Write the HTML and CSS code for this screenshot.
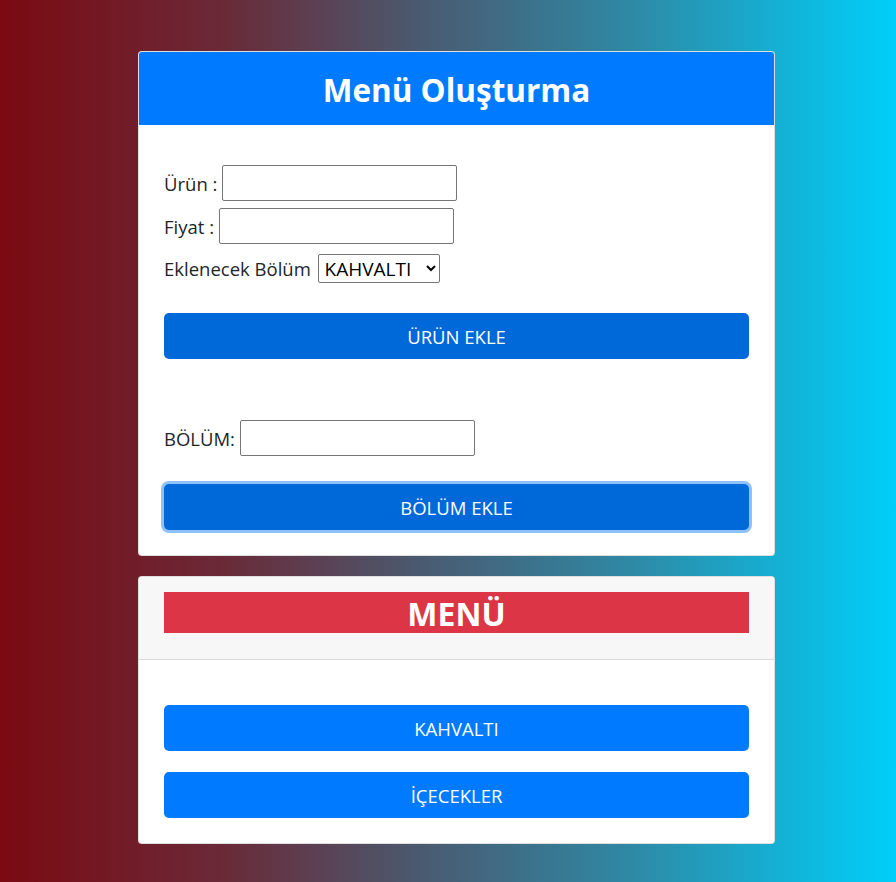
FILE: index.html
```html
<!DOCTYPE html>
<html lang="tr">
<head>
<meta charset="utf-8">
<title>Menü Oluşturma</title>
<link rel="stylesheet" href="styles.css">
</head>
<body>
<div class="wrap">
  <div class="card">
    <div class="card-head blue">
      <h1 class="title">Menü Oluşturma</h1>
    </div>
    <div class="card-body form-body">
      <div class="row">Ürün : <input class="field" type="text"></div>
      <div class="row">Fiyat : <input class="field" type="text"></div>
      <div class="row sel-row">Eklenecek Bölüm <select class="sel"><option>KAHVALTI</option></select></div>
      <button class="btn dark first-btn">ÜRÜN EKLE</button>
      <div class="row section-row">BÖLÜM: <input class="field" type="text"></div>
      <button class="btn dark focus">BÖLÜM EKLE</button>
    </div>
  </div>
  <div class="card">
    <div class="card-head light">
      <h1 class="menu-title">MENÜ</h1>
    </div>
    <div class="card-body list-body">
      <button class="btn primary">KAHVALTI</button>
      <button class="btn primary">İÇECEKLER</button>
    </div>
  </div>
</div>
</body>
</html>
```
FILE: styles.css
```css
html, body {
  margin: 0;
  padding: 0;
}
body {
  width: 896px;
  height: 882px;
  background: linear-gradient(to right, #7b0a12 0%, #6a2a38 25%, #4a5a70 47%, #2f88a4 70%, #00cff9 100%);
  font-family: "Open Sans", "Noto Sans", sans-serif;
  color: #212529;
  overflow: hidden;
}
.wrap {
  width: 637px;
  margin: 51px 0 0 138px;
  display: flex;
  flex-direction: column;
  gap: 20px;
}
.card {
  background: #fff;
  border: 1px solid rgba(0,0,0,0.125);
  border-radius: 4px;
  overflow: hidden;
}
.card-head.blue {
  background: #007bff;
  height: 73px;
  display: flex;
  align-items: center;
  justify-content: center;
}
.title {
  margin: 0;
  color: #fff;
  font-size: 31.5px;
  font-weight: 700;
  line-height: 1;
  padding-top: 2px;
}
.card-head.light {
  background: #f7f7f7;
  border-bottom: 1px solid rgba(0,0,0,0.125);
  padding: 15px 25px 26px;
}
.menu-title {
  margin: 0;
  background: #dc3545;
  color: #fff;
  height: 41px;
  font-size: 32px;
  font-weight: 700;
  line-height: 44px;
  text-align: center;
}
.card-body {
  padding: 25px;
  display: flex;
  flex-direction: column;
}
.form-body {
  padding-top: 40px;
}
.row {
  font-size: 18.5px;
  display: flex;
  align-items: center;
  white-space: pre;
  height: 36px;
}
.row + .row {
  margin-top: 7px;
}
.sel-row {
  margin-top: 9px !important;
  height: 31px;
}
.field {
  width: 235px;
  height: 36px;
  box-sizing: border-box;
  border: 1px solid #767676;
  border-radius: 2px;
  margin: 0;
  font-size: 17px;
  font-family: inherit;
}
.sel {
  height: 29px;
  width: 122px;
  margin-left: 2px;
  font-size: 19px;
  font-family: "Open Sans", sans-serif;
  border: 1px solid #767676;
  border-radius: 2px;
  background: #fff;
  color: #000;
  padding: 0 2px;
}
.btn {
  height: 46px;
  border: none;
  border-radius: 5px;
  color: #fff;
  font-family: inherit;
  font-size: 18.5px;
  width: 100%;
  padding: 0;
}
.dark {
  background: #0069d9;
}
.first-btn {
  margin-top: 29px;
}
.section-row {
  margin-top: 61px;
}
.focus {
  margin-top: 28px;
  box-shadow: 0 0 0 3px #8fc2fa;
}
.primary {
  background: #007bff;
}
.list-body {
  padding-top: 45px;
  gap: 21px;
}
```
